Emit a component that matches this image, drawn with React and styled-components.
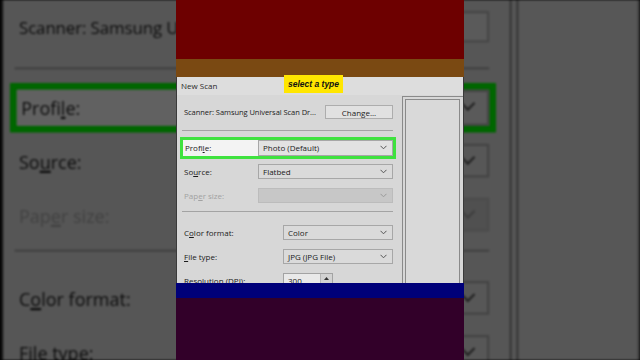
import React from "react";
import styled, { createGlobalStyle } from "styled-components";

const Global = createGlobalStyle`
  html, body { margin: 0; padding: 0; background: #000; }
  body { width: 640px; height: 360px; overflow: hidden; font-family: "Open Sans", "Noto Sans", sans-serif; }
  #root { width: 640px; height: 360px; }
`;

const Stage = styled.div`
  position: relative;
  width: 640px;
  height: 360px;
  overflow: hidden;
  background: #000;
  display: flex;
  justify-content: center;
`;

const Backdrop = styled.div`
  position: absolute;
  inset: 0;
  overflow: hidden;
  filter: blur(0.9px) brightness(0.4) saturate(1.6);
`;

const BackdropScale = styled.div`
  width: 288px;
  transform-origin: 0 0;
  transform: translate(1px, -52px) scale(2.25);
`;

const Column = styled.div`
  position: relative;
  z-index: 1;
  width: 288px;
  height: 360px;
  display: flex;
  flex-direction: column;
`;

const Band = styled.div`
  flex: ${(p) => (p.$grow ? "1 1 auto" : `0 0 ${p.$h}px`)};
  background: ${(p) => p.$bg};
`;

const Callout = styled.div`
  position: absolute;
  left: 108px;
  top: 75px;
  height: 18px;
  padding: 0 4px;
  background: #ffe600;
  display: flex;
  align-items: center;
  font-family: "Liberation Sans", Arial, sans-serif;
  font-weight: bold;
  font-style: italic;
  font-size: 8.5px;
  color: #111;
`;

const Window = styled.div`
  position: relative;
  flex: 0 0 206px;
  width: 288px;
  height: 206px;
  box-sizing: border-box;
  border-left: 1px solid #3a3a3a;
  border-right: 1px solid #3a3a3a;
  background: #d7d7d7;
  overflow: hidden;
  display: flex;
  flex-direction: column;
  font-family: "Open Sans", "Noto Sans", sans-serif;
  font-size: 8px;
  color: #1b1b1b;
`;

const TitleBar = styled.div`
  flex: 0 0 18px;
  display: flex;
  align-items: center;
  padding: 0 0 2px 4px;
  box-sizing: border-box;
  background: #dddddd;
  color: #2a2a2a;
  font-size: 8px;
`;

const Body = styled.div`
  flex: 1;
  min-height: 0;
  display: flex;
`;

const Form = styled.div`
  flex: 0 0 216px;
  box-sizing: border-box;
  padding: 10px 0 0 7px;
  margin-right: 9px;
  display: flex;
  flex-direction: column;
`;

const ScannerRow = styled.div`
  flex: 0 0 14px;
  display: flex;
  align-items: center;
  justify-content: space-between;
  margin-bottom: 11px;
  white-space: nowrap;
`;

const ScannerName = styled.span`
  font-size: 7.5px;
  letter-spacing: -0.05px;
`;

const Button = styled.div`
  flex: 0 0 68px;
  height: 14px;
  box-sizing: border-box;
  border: 1px solid #adadad;
  background: #e1e1e1;
  display: flex;
  align-items: center;
  justify-content: center;
  color: #1b1b1b;
`;

const Separator = styled.div`
  flex: 0 0 1px;
  background: #a3a3a3;
  margin: ${(p) => p.$m};
  margin-left: -2px;
`;

const Row = styled.div`
  flex: 0 0 ${(p) => p.$h || 24}px;
  display: flex;
  align-items: center;
`;

const Highlight = styled.div`
  flex: 1;
  height: 22px;
  box-sizing: border-box;
  margin: 0 -3px 0 -4px;
  border: 3px solid #3fe23f;
  display: flex;
`;

const Label = styled.div`
  flex: 0 0 ${(p) => p.$w}px;
  box-sizing: border-box;
  padding-left: ${(p) => (p.$hl ? 2 : 0)}px;
  display: flex;
  align-items: center;
  background: ${(p) => (p.$hl ? "#f3f3f3" : "transparent")};
  color: ${(p) => (p.$disabled ? "#a2a2a2" : "#1b1b1b")};
  white-space: nowrap;
`;

const Key = styled.u`
  text-decoration: underline;
  text-underline-offset: 1px;
`;

const Select = styled.div`
  flex: 1;
  height: ${(p) => (p.$hl ? 16 : 15)}px;
  box-sizing: border-box;
  border: 1px solid ${(p) => (p.$disabled ? "#bcbcbc" : "#a7a7a7")};
  background: ${(p) => (p.$disabled ? "#c7c7c7" : p.$hl ? "#e2e2e2" : "#dadada")};
  display: flex;
  align-items: center;
  justify-content: space-between;
  padding: 0 5px 0 4px;
  color: #1b1b1b;
  white-space: nowrap;
`;

const Spin = styled.div`
  width: 50px;
  height: 15px;
  box-sizing: border-box;
  border: 1px solid #a3a3a3;
  background: #e9e9e9;
  display: flex;
  align-items: center;
  padding-left: 4px;
`;

const SpinValue = styled.span`
  flex: 1;
`;

const SpinButton = styled.div`
  width: 12px;
  height: 100%;
  background: #d2d2d2;
  border-left: 1px solid #b5b5b5;
  display: flex;
  align-items: flex-start;
  justify-content: center;
  padding-top: 3px;
  box-sizing: border-box;
`;

const Preview = styled.div`
  flex: 1;
  margin-top: 1px;
  padding: 2px 3px 0 2px;
  border-left: 1px solid #8a8a8a;
  border-top: 1px solid #8a8a8a;
  display: flex;
`;

const PreviewInner = styled.div`
  flex: 1;
  border: 1px solid #8a8a8a;
  border-bottom: none;
  background: #d9d9d9;
`;

const Chevron = ({ color = "#555" }) => (
  <svg width="7" height="5" viewBox="0 0 7 5">
    <polyline points="0.5,0.8 3.5,3.8 6.5,0.8" fill="none" stroke={color} strokeWidth="1" />
  </svg>
);

const UpArrow = () => (
  <svg width="5" height="3" viewBox="0 0 5 3">
    <polygon points="0,3 2.5,0 5,3" fill="#333" />
  </svg>
);

function ScanDialog() {
  return (
    <Window>
      <TitleBar>New Scan</TitleBar>
      <Body>
        <Form>
          <ScannerRow>
            <ScannerName>Scanner: Samsung Universal Scan Dr...</ScannerName>
            <Button>Change...</Button>
          </ScannerRow>
          <Separator $m="0 0 5px 0" />
          <Row $h={23}>
            <Highlight>
              <Label $w={75} $hl>
                <span>
                  Profi<Key>l</Key>e:
                </span>
              </Label>
              <Select $hl>
                <span>Photo (Default)</span>
                <Chevron />
              </Select>
            </Highlight>
          </Row>
          <Row>
            <Label $w={74}>
              <span>
                So<Key>u</Key>rce:
              </span>
            </Label>
            <Select>
              <span>Flatbed</span>
              <Chevron />
            </Select>
          </Row>
          <Row>
            <Label $w={74} $disabled>
              <span>
                Pap<Key>e</Key>r size:
              </span>
            </Label>
            <Select $disabled>
              <span />
              <Chevron color="#9a9a9a" />
            </Select>
          </Row>
          <Separator $m="4px 0 8px 0" />
          <Row>
            <Label $w={99}>
              <span>
                C<Key>o</Key>lor format:
              </span>
            </Label>
            <Select>
              <span>Color</span>
              <Chevron />
            </Select>
          </Row>
          <Row>
            <Label $w={99}>
              <span>
                <Key>F</Key>ile type:
              </span>
            </Label>
            <Select>
              <span>JPG (JPG File)</span>
              <Chevron />
            </Select>
          </Row>
          <Row>
            <Label $w={99}>
              <span>
                <Key>R</Key>esolution (DPI):
              </span>
            </Label>
            <Spin>
              <SpinValue>300</SpinValue>
              <SpinButton>
                <UpArrow />
              </SpinButton>
            </Spin>
          </Row>
        </Form>
        <Preview>
          <PreviewInner />
        </Preview>
      </Body>
    </Window>
  );
}

export default function App() {
  return (
    <>
      <Global />
      <Stage>
        <Backdrop>
          <BackdropScale>
            <ScanDialog />
          </BackdropScale>
        </Backdrop>
        <Column>
          <Band $h={59} $bg="#6d0000" />
          <Band $h={18} $bg="#7a4912" />
          <ScanDialog />
          <Band $h={15} $bg="#000079" />
          <Band $grow $bg="#320029" />
          <Callout>select a type</Callout>
        </Column>
      </Stage>
    </>
  );
}
